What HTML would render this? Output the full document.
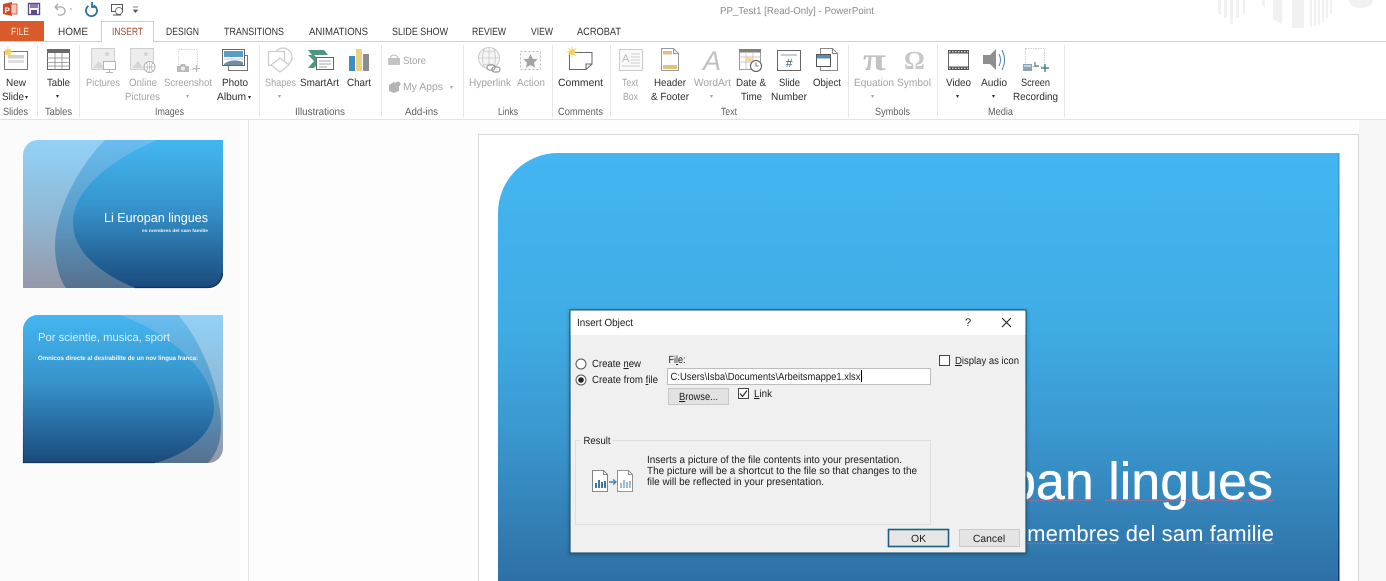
<!DOCTYPE html>
<html><head><meta charset="utf-8"><title>PP_Test1 [Read-Only] - PowerPoint</title>
<style>
html,body{margin:0;padding:0;width:1386px;height:581px;overflow:hidden;background:#fff}
svg{position:absolute;left:0;top:0;display:block;filter:blur(.3px)}
text{font-family:"Liberation Sans",sans-serif;font-size:10.5px;fill:#2e2e2e;text-rendering:geometricPrecision}
.g text,text.g{fill:#a4a4a4}
.tab text{font-size:10.5px;fill:#333}
.lb text{fill:#5f5f5f;font-size:10.5px}
.d text{font-size:10.4px;fill:#1c1c1c}
.a{font-size:6px}
</style></head><body>
<svg width="1386" height="581" viewBox="0 0 1386 581" xmlns="http://www.w3.org/2000/svg">
<defs>
<linearGradient id="big" x1="0" y1="0" x2="0" y2="1"><stop offset="0" stop-color="#42b6f1"/><stop offset=".4" stop-color="#40ace5"/><stop offset=".65" stop-color="#3a98cf"/><stop offset="1" stop-color="#2e70a5"/></linearGradient>
<linearGradient id="inn" x1="0" y1="0" x2="0" y2="1"><stop offset="0" stop-color="#43b7f2"/><stop offset=".45" stop-color="#3793cb"/><stop offset="1" stop-color="#1a4a7c"/></linearGradient>
<linearGradient id="mid" x1="0" y1="0" x2="0" y2="1"><stop offset="0" stop-color="#68bdf0"/><stop offset=".5" stop-color="#5b9dc8"/><stop offset="1" stop-color="#56708f"/></linearGradient>
<linearGradient id="out" x1="0" y1="0" x2="0" y2="1"><stop offset="0" stop-color="#92d1f7"/><stop offset=".5" stop-color="#8fb9d6"/><stop offset="1" stop-color="#9598a8"/></linearGradient>
<linearGradient id="edge" x1="0" y1="0" x2="0" y2="1"><stop offset="0" stop-color="#3aa0d8"/><stop offset=".6" stop-color="#1f5f9c"/><stop offset="1" stop-color="#10357f"/></linearGradient>
<linearGradient id="ledge" gradientUnits="userSpaceOnUse" x1="0" y1="390" x2="0" y2="463"><stop offset="0" stop-color="#2a6ea0" stop-opacity="0"/><stop offset="1" stop-color="#0f2c58"/></linearGradient>
<clipPath id="c1"><path d="M38 140H223V273A15 15 0 0 1 208 288H23V155A15 15 0 0 1 38 140Z"/></clipPath>
<clipPath id="c2"><path d="M38 315H223V448A15 15 0 0 1 208 463H23V330A15 15 0 0 1 38 315Z"/></clipPath>
<filter id="sh" x="-3%" y="-3%" width="106%" height="106%"><feDropShadow dx="0" dy="1" stdDeviation="2" flood-color="#000" flood-opacity=".3"/></filter>
</defs>

<rect x="0" y="0" width="1386" height="581" fill="#fff"/>
<rect x="0" y="120" width="241" height="461" fill="#fbfbfb"/>
<rect x="248" y="120" width="1" height="461" fill="#e4e4e4"/>
<rect x="249" y="120" width="1137" height="461" fill="#fdfdfd"/>
<rect x="1359" y="120" width="27" height="461" fill="#f7f7f7"/>
<path d="M478.500 581V134.500H1358.500V581" fill="#fff" stroke="#d6d6d6"/>

<g fill="#f1f1f1">
<rect x="1218" y="0" width="3" height="14"/><rect x="1224" y="0" width="3" height="18"/><rect x="1230" y="0" width="3" height="24"/><rect x="1236" y="0" width="3" height="18"/><rect x="1243" y="0" width="2" height="14"/>
<path d="M1262 0h3l0 8-3-4zM1273 0h9v24l-9-5zM1292 0h12v28h-12z"/>
<rect x="1310" y="0" width="2" height="27"/><rect x="1314" y="0" width="2" height="26"/><rect x="1318" y="0" width="2" height="25"/><rect x="1322" y="0" width="2" height="22"/><rect x="1326" y="0" width="2" height="18"/><rect x="1330" y="0" width="2" height="14"/>
<path d="M1349 0h24a12 8 0 0 1-24 0z"/>
</g>

<path d="M3 4l9-2v14l-9-2z" fill="#d24726"/><rect x="11" y="4" width="6" height="10" fill="#f4c9b8" stroke="#d24726" stroke-width=".8"/>
<text x="4.500" y="13" style="font-size:8px;font-weight:bold;fill:#fff">P</text>
<rect x="28.500" y="3.500" width="11" height="11" fill="#fff" stroke="#5b4a8c" stroke-width="1.400"/><rect x="30" y="4" width="8" height="4" fill="#8a7ab0"/><rect x="31" y="10" width="6" height="4" fill="#5b4a8c"/>
<path d="M55 7h6a4 4 0 0 1 0 8h-3M55 7l3-3M55 7l3 3" fill="none" stroke="#a8a8a8" stroke-width="1.300"/>
<path d="M70 9l2 0" stroke="#bbb" stroke-width="1.500"/>
<path d="M88.500 6a5.500 5.500 0 1 0 5 -.5M92 2v5h4.500" fill="none" stroke="#2d6f9e" stroke-width="1.800"/>
<rect x="111.500" y="4.500" width="11" height="7" fill="#fff" stroke="#555"/><path d="M117 12v3M113 15h8" stroke="#555"/><circle cx="119" cy="11" r="3.500" fill="#fff" stroke="#555" stroke-width=".8"/>
<path d="M133 7h5M133.500 10h4l-2 2.500z" fill="#555" stroke="#555" stroke-width=".7"/>
<text x="720" y="14" textLength="154" lengthAdjust="spacingAndGlyphs" style="fill:#8a8a8a;font-size:10px">PP_Test1 [Read-Only] - PowerPoint</text>

<rect x="0" y="21" width="44" height="20" fill="#d95a2b"/>
<text x="11" y="35" textLength="18" lengthAdjust="spacingAndGlyphs" style="fill:#fde6da">FILE</text>
<rect x="0" y="41" width="1386" height="1" fill="#cfcfcf"/>
<path d="M101.500 42V21.500H153.500V42" fill="#fff" stroke="#cfcfcf"/><rect x="102" y="41" width="51" height="1" fill="#fff"/>
<g class="tab">
<text x="58" y="35" textLength="30" lengthAdjust="spacingAndGlyphs">HOME</text>
<text x="112" y="35" textLength="31" lengthAdjust="spacingAndGlyphs" style="fill:#a8482a">INSERT</text>
<text x="166" y="35" textLength="33" lengthAdjust="spacingAndGlyphs">DESIGN</text>
<text x="224" y="35" textLength="60" lengthAdjust="spacingAndGlyphs">TRANSITIONS</text>
<text x="309" y="35" textLength="59" lengthAdjust="spacingAndGlyphs">ANIMATIONS</text>
<text x="392" y="35" textLength="56" lengthAdjust="spacingAndGlyphs">SLIDE SHOW</text>
<text x="472" y="35" textLength="34" lengthAdjust="spacingAndGlyphs">REVIEW</text>
<text x="531" y="35" textLength="22" lengthAdjust="spacingAndGlyphs">VIEW</text>
<text x="577" y="35" textLength="44" lengthAdjust="spacingAndGlyphs">ACROBAT</text>
</g>
<rect x="0" y="119" width="1386" height="1" fill="#e3e3e3"/>
<g fill="#e6e6e6"><rect x="37" y="45" width="1" height="72"/><rect x="79" y="45" width="1" height="72"/><rect x="259" y="45" width="1" height="72"/><rect x="381" y="45" width="1" height="72"/><rect x="463" y="45" width="1" height="72"/><rect x="552" y="45" width="1" height="72"/><rect x="610" y="45" width="1" height="72"/><rect x="848" y="45" width="1" height="72"/><rect x="937" y="45" width="1" height="72"/><rect x="1064" y="45" width="1" height="72"/></g>

<g>
<text x="6" y="86" textLength="20" lengthAdjust="spacingAndGlyphs">New</text>
<text x="2" y="100" textLength="22" lengthAdjust="spacingAndGlyphs">Slide</text><text x="25" y="99" class="a">▾</text>
<text x="47" y="86" textLength="23" lengthAdjust="spacingAndGlyphs">Table</text><text x="56" y="98" class="a">▾</text>
<text x="222" y="86" textLength="26" lengthAdjust="spacingAndGlyphs">Photo</text>
<text x="217" y="100" textLength="29" lengthAdjust="spacingAndGlyphs">Album</text><text x="248" y="99" class="a">▾</text>
<text x="300" y="86" textLength="39" lengthAdjust="spacingAndGlyphs">SmartArt</text>
<text x="347" y="86" textLength="24" lengthAdjust="spacingAndGlyphs">Chart</text>
<text x="558" y="86" textLength="45" lengthAdjust="spacingAndGlyphs">Comment</text>
<text x="654" y="86" textLength="32" lengthAdjust="spacingAndGlyphs">Header</text>
<text x="651" y="100" textLength="38" lengthAdjust="spacingAndGlyphs">&amp; Footer</text>
<text x="736" y="86" textLength="30" lengthAdjust="spacingAndGlyphs">Date &amp;</text>
<text x="741" y="100" textLength="21" lengthAdjust="spacingAndGlyphs">Time</text>
<text x="779" y="86" textLength="21" lengthAdjust="spacingAndGlyphs">Slide</text>
<text x="771" y="100" textLength="36" lengthAdjust="spacingAndGlyphs">Number</text>
<text x="813" y="86" textLength="28" lengthAdjust="spacingAndGlyphs">Object</text>
<text x="946" y="86" textLength="25" lengthAdjust="spacingAndGlyphs">Video</text><text x="956" y="98" class="a">▾</text>
<text x="981" y="86" textLength="26" lengthAdjust="spacingAndGlyphs">Audio</text><text x="992" y="98" class="a">▾</text>
<text x="1021" y="86" textLength="29" lengthAdjust="spacingAndGlyphs">Screen</text>
<text x="1013" y="100" textLength="45" lengthAdjust="spacingAndGlyphs">Recording</text>
</g>
<g class="g">
<text x="86" y="86" textLength="34" lengthAdjust="spacingAndGlyphs">Pictures</text>
<text x="129" y="86" textLength="28" lengthAdjust="spacingAndGlyphs">Online</text>
<text x="125" y="100" textLength="35" lengthAdjust="spacingAndGlyphs">Pictures</text>
<text x="164" y="86" textLength="48" lengthAdjust="spacingAndGlyphs">Screenshot</text><text x="186" y="98" class="a">▾</text>
<text x="265" y="86" textLength="31" lengthAdjust="spacingAndGlyphs">Shapes</text><text x="278" y="98" class="a">▾</text>
<text x="469" y="86" textLength="42" lengthAdjust="spacingAndGlyphs">Hyperlink</text>
<text x="517" y="86" textLength="28" lengthAdjust="spacingAndGlyphs">Action</text>
<text x="622" y="86" textLength="16" lengthAdjust="spacingAndGlyphs">Text</text>
<text x="623" y="100" textLength="15" lengthAdjust="spacingAndGlyphs">Box</text>
<text x="694" y="86" textLength="37" lengthAdjust="spacingAndGlyphs">WordArt</text><text x="710" y="98" class="a">▾</text>
<text x="854" y="86" textLength="40" lengthAdjust="spacingAndGlyphs">Equation</text><text x="871" y="98" class="a">▾</text>
<text x="897" y="86" textLength="34" lengthAdjust="spacingAndGlyphs">Symbol</text>
<text x="403" y="64" textLength="23" lengthAdjust="spacingAndGlyphs">Store</text>
<text x="403" y="90" textLength="40" lengthAdjust="spacingAndGlyphs">My Apps</text><text x="450" y="89" class="a">▾</text>
</g>
<g class="lb">
<text x="3" y="115" textLength="25" lengthAdjust="spacingAndGlyphs">Slides</text>
<text x="45" y="115" textLength="27" lengthAdjust="spacingAndGlyphs">Tables</text>
<text x="155" y="115" textLength="29" lengthAdjust="spacingAndGlyphs">Images</text>
<text x="295" y="115" textLength="50" lengthAdjust="spacingAndGlyphs">Illustrations</text>
<text x="405" y="115" textLength="33" lengthAdjust="spacingAndGlyphs">Add-ins</text>
<text x="498" y="115" textLength="20" lengthAdjust="spacingAndGlyphs">Links</text>
<text x="558" y="115" textLength="45" lengthAdjust="spacingAndGlyphs">Comments</text>
<text x="721" y="115" textLength="16" lengthAdjust="spacingAndGlyphs">Text</text>
<text x="875" y="115" textLength="35" lengthAdjust="spacingAndGlyphs">Symbols</text>
<text x="988" y="115" textLength="25" lengthAdjust="spacingAndGlyphs">Media</text>
</g>

<!-- New Slide -->
<rect x="4.500" y="51.500" width="23" height="18" fill="#fff" stroke="#777"/><rect x="8" y="55" width="16" height="3.500" fill="#cfcfcf"/><rect x="8" y="60" width="16" height="3" fill="#dedede"/>
<circle cx="8" cy="52" r="3" fill="#f4d050"/><path d="M8 47v10M3 52h10M4.500 48.500l7 7M11.500 48.500l-7 7" stroke="#f2cf66" stroke-width=".8"/>
<!-- Table -->
<rect x="47.500" y="49.500" width="22" height="20" fill="#fff" stroke="#666"/><rect x="47" y="49" width="23" height="4" fill="#6a6a6a"/>
<path d="M47 58h23M47 62.500h23M47 66h23M55 53v17M62 53v17" stroke="#888" stroke-width=".8"/>
<!-- Pictures -->
<rect x="91.500" y="48.500" width="23" height="21" fill="#ededed" stroke="#cfcfcf"/><circle cx="107" cy="54" r="2" fill="#d5d5d5"/><path d="M93 68l6-7 5 7z" fill="#d6d6d6"/>
<rect x="103.500" y="61.500" width="12" height="8" fill="#fff" stroke="#b4b4b4"/><path d="M109.500 70v2M106 72.500h7" stroke="#b4b4b4"/>
<!-- Online Pictures -->
<rect x="130.500" y="48.500" width="23" height="21" fill="#ededed" stroke="#cfcfcf"/><circle cx="146" cy="54" r="2" fill="#d5d5d5"/><path d="M132 68l6-7 5 7z" fill="#d6d6d6"/>
<circle cx="149.500" cy="67" r="5.500" fill="#fff" stroke="#b4b4b4"/><path d="M144 67h11M149.500 61.500v11M146 62.500q3.500 4.500 0 9M153 62.500q-3.500 4.500 0 9" fill="none" stroke="#b4b4b4" stroke-width=".7"/>
<!-- Screenshot -->
<rect x="178.500" y="49.500" width="19" height="20" fill="none" stroke="#d6d6d6" stroke-dasharray="1.500 1"/>
<path d="M177 66h3l1-2h4l1 2h3v6h-12z" fill="#bababa"/><circle cx="183" cy="68.500" r="2" fill="#eee"/><path d="M193 68.500h7M196.500 65v7" stroke="#b4b4b4"/>
<!-- Photo Album -->
<rect x="228.500" y="55.500" width="19" height="15" fill="#fff" stroke="#777"/><rect x="222.500" y="49.500" width="22" height="16" fill="#fff" stroke="#666"/>
<rect x="224" y="51" width="19" height="6" fill="#5a9cc4"/><path d="M224 64q8-6 19-2v3h-19z" fill="#6f8ea6"/><rect x="224" y="58" width="19" height="2" fill="#d8e8f2"/>
<!-- Shapes -->
<circle cx="283" cy="57" r="9" fill="#fff" stroke="#cbcbcb" stroke-width="1.200"/><rect x="268.500" y="51.500" width="16" height="14" fill="#fff" stroke="#cbcbcb" stroke-width="1.200"/>
<path d="M280 58l9 7-9 7-9-7z" fill="#fff" stroke="#cbcbcb" stroke-width="1.200"/>
<!-- SmartArt -->
<path d="M308 50h16l4 5h-16zM308 68l6-7-6-6h6l6 6-6 7z" fill="#4d9585"/>
<rect x="316.500" y="57.500" width="17" height="12" fill="#fff" stroke="#666"/><path d="M319 61h12M319 64h12M319 67h8" stroke="#888" stroke-width=".8"/>
<!-- Chart -->
<rect x="349" y="56" width="6" height="15" fill="#3f8dc6"/><rect x="356" y="49" width="6" height="22" fill="#ecd27e"/><rect x="363" y="54" width="6" height="17" fill="#8d8d8d"/>
<!-- Store & Apps -->
<path d="M388 58h12v7h-12z" fill="#c4c4c4"/><path d="M390 58q1-3 4-3t4 3" fill="none" stroke="#c4c4c4" stroke-width="1.200"/>
<path d="M389 85l5-3 5 3v6l-5 2-5-2z" fill="#b4b4b4"/><circle cx="398" cy="84" r="2.500" fill="#b4b4b4"/>
<!-- Hyperlink -->
<circle cx="489" cy="58" r="10.500" fill="#f4f4f4" stroke="#cacaca"/><path d="M478.500 58h21M489 47.500v21M482 50q7 4 14 0M482 66q7-4 14 0M484 49q-3 9 0 18M494 49q3 9 0 18" fill="none" stroke="#cacaca" stroke-width=".8"/>
<rect x="487" y="65" width="8" height="5" rx="2.500" fill="#fff" stroke="#999" stroke-width="1.200"/><rect x="492" y="67" width="8" height="5" rx="2.500" fill="none" stroke="#999" stroke-width="1.200"/>
<!-- Action -->
<rect x="520.500" y="51.500" width="20" height="18" fill="#f8f8f8" stroke="#bbb" stroke-dasharray="2 2"/><path d="M530.500 54l2.200 4.700 5 .6-3.700 3.300 1 5-4.500-2.500-4.500 2.500 1-5-3.700-3.300 5-.6z" fill="#a4a4a4"/>
<!-- Comment -->
<path d="M569.500 52.500H592V64l-6 5.500H569.500z" fill="#fff" stroke="#666"/><path d="M586 69.500V64h6" fill="none" stroke="#666"/>
<circle cx="572" cy="52" r="3" fill="#f4d050"/><path d="M572 46.500v11M566.500 52h11M568 48l8 8M576 48l-8 8" stroke="#f2cf66" stroke-width=".8"/>
<!-- Text Box -->
<rect x="619.500" y="49.500" width="23" height="21" fill="#fafafa" stroke="#cbcbcb"/><text x="622" y="62" style="font-size:11px;fill:#bababa">A</text><path d="M631 54h9M631 57h9M631 60h9M631 63h9M622 66h18" stroke="#cfcfcf"/>
<!-- Header & Footer -->
<path d="M661.500 48.500h12l5 5v17h-17z" fill="#fff" stroke="#999"/><path d="M673.500 48.500v5h5" fill="none" stroke="#999"/><rect x="663" y="51" width="9" height="3.500" fill="#dcc27c"/><rect x="663" y="65" width="14" height="4" fill="#dcc27c"/>
<!-- WordArt -->
<text x="703" y="70" style="font-size:27px;font-style:italic;fill:#c0c0c0">A</text>
<!-- Date & Time -->
<rect x="739.500" y="49.500" width="21" height="20" fill="#fff" stroke="#999"/><rect x="739" y="49" width="22" height="3.500" fill="#808080"/>
<path d="M739 57h22M739 62h22M746 53v17M753 53v17" stroke="#bbb" stroke-width=".8"/><rect x="746" y="57" width="7" height="5" fill="#f1d99a"/>
<circle cx="756" cy="66" r="5.500" fill="#fff" stroke="#555"/><path d="M756 62.500V66h2.500" fill="none" stroke="#555" stroke-width=".8"/>
<!-- Slide Number -->
<rect x="777.500" y="50.500" width="23" height="20" fill="#fff" stroke="#666"/><path d="M781 55h16" stroke="#999"/><text x="789" y="67" style="font-size:12px;font-style:italic;fill:#3a5f78;text-anchor:middle">#</text>
<!-- Object -->
<path d="M820.500 48.500h12l5 5v17h-17z" fill="#fff" stroke="#888"/><path d="M832.500 48.500v5h5" fill="none" stroke="#888"/>
<rect x="816.500" y="54.500" width="14" height="12" fill="#fff" stroke="#555"/><rect x="817" y="55" width="13" height="3.500" fill="#5a8cb8"/>
<!-- Pi / Omega -->
<text x="863" y="70" textLength="23" lengthAdjust="spacingAndGlyphs" style="font-family:'Liberation Serif',serif;font-size:32px;font-weight:bold;fill:#c2c2c2">π</text>
<text x="904" y="69" style="font-family:'Liberation Serif',serif;font-size:26px;font-weight:bold;fill:#c8c8c8">Ω</text>
<!-- Video -->
<rect x="948.500" y="51.500" width="20" height="18" fill="#fff" stroke="#666"/><rect x="948" y="50" width="21" height="3.500" fill="#555"/><rect x="948" y="66.500" width="21" height="3.500" fill="#555"/>
<path d="M949 51.800h19M949 68.200h19" stroke="#fff" stroke-dasharray="1.500 1.500"/>
<!-- Audio -->
<path d="M983 55h7l6-6v21l-6-6h-7z" fill="#8f8f8f"/><path d="M999 54q3 6 0 12M1002 50q5 10 0 20" fill="none" stroke="#4a86ab" stroke-width="1"/>
<!-- Screen Recording -->
<rect x="1025.500" y="48.500" width="19" height="18" fill="none" stroke="#d0d0d0" stroke-dasharray="1.500 1"/>
<rect x="1023" y="64" width="9" height="7" fill="#8aa6b6"/><path d="M1024 66h7" stroke="#fff"/><path d="M1035 62v5M1035 66h4" stroke="#555"/><path d="M1041 68h8M1045 64v8" stroke="#2d6f7e" stroke-width="1.200"/>

<!-- Thumbnail 1 -->
<g clip-path="url(#c1)">
<rect x="23" y="140" width="200" height="148" fill="url(#out)"/>
<path d="M105 140C75 170 55 215 55 245C55 265 60 280 66 288H223V140Z" fill="url(#mid)"/>
<path d="M157 140C110 160 73 190 73 222C73 255 105 275 135 288H223V140Z" fill="url(#inn)"/>
</g>
<path d="M135 287.500H208A15 15 0 0 0 222.500 273" fill="none" stroke="#102f5e" stroke-width="1.200"/>
<text x="104" y="222" textLength="104" lengthAdjust="spacingAndGlyphs" style="fill:#fff;font-size:13px">Li Europan lingues</text>
<text x="142" y="232" textLength="66" lengthAdjust="spacingAndGlyphs" style="fill:#e8f4fb;font-size:4.500px;font-weight:bold">es membres del sam familie</text>

<!-- Thumbnail 2 -->
<g clip-path="url(#c2)">
<rect x="23" y="315" width="200" height="148" fill="url(#out)"/>
<path d="M23 315H178C205 345 221 395 221 425C221 445 215 455 208 463H23Z" fill="url(#mid)"/>
<path d="M23 315H120C175 335 214 375 214 408C214 435 185 455 155 463H23Z" fill="url(#inn)"/>
</g>
<path d="M23.300 390V462.700H155" fill="none" stroke="url(#ledge)" stroke-width=".8"/>
<text x="38" y="341" textLength="132" lengthAdjust="spacingAndGlyphs" style="fill:#d8f0fc;font-size:11.500px">Por scientie, musica, sport</text>
<text x="38" y="360" textLength="160" lengthAdjust="spacingAndGlyphs" style="fill:#f0f8fd;font-size:6.300px;font-weight:bold">Omnicos directe al desirabilite de un nov lingua franca:</text>

<!-- Big slide -->
<path d="M558 153H1339V581H498V213A60 60 0 0 1 558 153Z" fill="url(#big)"/>
<rect x="1338" y="153" width="1.500" height="428" fill="url(#edge)"/>
<text x="1273" y="499" style="fill:#fff;stroke:#fff;stroke-width:.4px;font-size:52px;text-anchor:end">Li Europan lingues</text>
<text x="1274" y="541" style="fill:#fff;font-size:22px;text-anchor:end;letter-spacing:.1px">es membres del sam familie</text>
<path d="M1020 500.500H1092M1105 500.500H1274M1020 543.500H1116M1205 543.500H1275" fill="none" stroke="#b8688a" stroke-width="1.200" stroke-dasharray="1.500 1"/>

<!-- Dialog -->
<g filter="url(#sh)"><rect x="570" y="310" width="456" height="243" fill="#f0f0f0" stroke="#1c5673" stroke-width="1.200"/></g>
<rect x="570.600" y="310.600" width="454.800" height="24.400" fill="#fff"/>
<g class="d">
<text x="577" y="326" textLength="56" lengthAdjust="spacingAndGlyphs">Insert Object</text>
<text x="965" y="326" style="font-size:11px">?</text>
<path d="M1002 318l9 9M1011 318l-9 9" stroke="#222" stroke-width="1.100"/>

<circle cx="581" cy="364" r="5" fill="#fff" stroke="#555"/>
<circle cx="581" cy="380" r="5" fill="#fff" stroke="#555"/><circle cx="581" cy="380" r="2.800" fill="#222"/>
<text x="592" y="367" textLength="49" lengthAdjust="spacingAndGlyphs">Create <tspan text-decoration="underline">n</tspan>ew</text>
<text x="592" y="383" textLength="66" lengthAdjust="spacingAndGlyphs">Create from <tspan text-decoration="underline">f</tspan>ile</text>
<text x="668.500" y="363" textLength="17" lengthAdjust="spacingAndGlyphs">Fi<tspan text-decoration="underline">l</tspan>e:</text>
<rect x="667.500" y="368.500" width="263" height="16" fill="#fff" stroke="#bdbdbd"/>
<text x="670.500" y="380" textLength="190" lengthAdjust="spacingAndGlyphs">C:Users\Isba\Documents\Arbeitsmappe1.xlsx</text>
<rect x="861" y="370" width="1" height="12" fill="#000"/>
<rect x="668.500" y="388.500" width="60" height="16" fill="#e2e2e2" stroke="#c8c8c8"/>
<text x="679" y="400" textLength="39" lengthAdjust="spacingAndGlyphs"><tspan text-decoration="underline">B</tspan>rowse...</text>
<rect x="738.500" y="388.500" width="10" height="10" fill="#fff" stroke="#444"/>
<path d="M740 393.500l2.500 3 4.500-6" fill="none" stroke="#222" stroke-width="1.100"/>
<text x="754" y="397" textLength="18" lengthAdjust="spacingAndGlyphs"><tspan text-decoration="underline">L</tspan>ink</text>
<rect x="939.500" y="355.500" width="10" height="10" fill="#fff" stroke="#444"/>
<text x="955" y="364" textLength="64" lengthAdjust="spacingAndGlyphs"><tspan text-decoration="underline">D</tspan>isplay as icon</text>

<path d="M612 440.500H930.500V525M575.500 440.500H580M575.500 440.500V524.500H931" fill="none" stroke="#dedede"/>
<text x="583.500" y="444" textLength="27" lengthAdjust="spacingAndGlyphs">Result</text>
<text x="647" y="463" textLength="255" lengthAdjust="spacingAndGlyphs">Inserts a picture of the file contents into your presentation.</text>
<text x="647" y="474" textLength="270" lengthAdjust="spacingAndGlyphs">The picture will be a shortcut to the file so that changes to the</text>
<text x="647" y="485" textLength="177" lengthAdjust="spacingAndGlyphs">file will be reflected in your presentation.</text>

<path d="M592.500 470.500h11l4 4v17h-15z" fill="#fff" stroke="#666" stroke-width=".8"/><path d="M603.500 470.500v4h4" fill="none" stroke="#666" stroke-width=".8"/>
<path d="M595 488v-5h2v5zM598 488v-8h2v8zM601 488v-6h2v6zM604 488v-7h2v7z" fill="#3f78ae"/>
<path d="M609 482h6M613 479.500l3 2.500-3 2.500" fill="none" stroke="#3f86b8" stroke-width="1.400"/>
<path d="M617.500 470.500h11l4 4v17h-15z" fill="#fff" stroke="#777" stroke-width=".8"/><path d="M628.500 470.500v4h4" fill="none" stroke="#777" stroke-width=".8"/>
<path d="M620 488v-5h2v5zM623 488v-8h2v8zM626 488v-6h2v6zM629 488v-7h2v7z" fill="#9fbcd0"/>

<rect x="888.500" y="529.500" width="60" height="17" fill="#e6e6e6" stroke="#1c5f80" stroke-width="1.600"/>
<text x="918.500" y="542" style="text-anchor:middle">OK</text>
<rect x="959.500" y="529.500" width="60" height="17" fill="#e4e4e4" stroke="#cbcbcb"/>
<text x="989" y="542" style="text-anchor:middle">Cancel</text>
</g>
</svg>
</body></html>
